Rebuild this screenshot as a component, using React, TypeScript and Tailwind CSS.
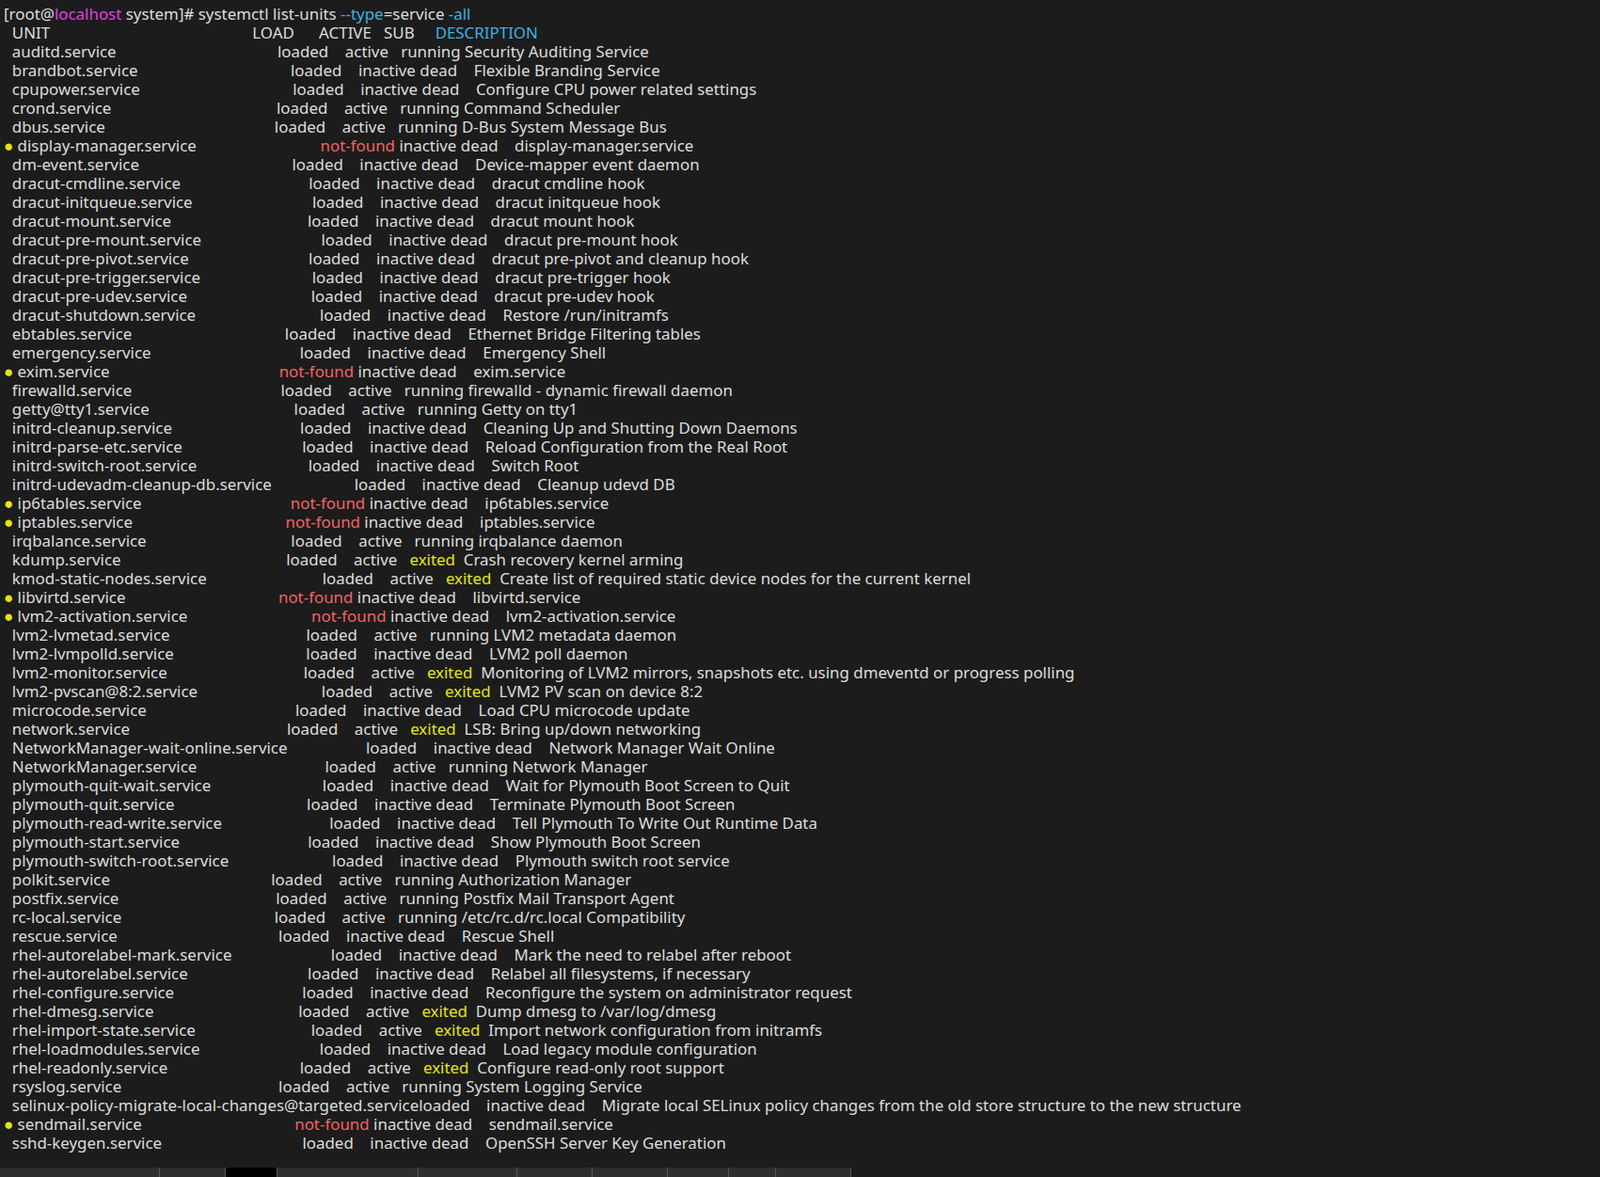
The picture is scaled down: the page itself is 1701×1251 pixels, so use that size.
const rows: [string, string, string, string, string][] = [
  ['auditd.service', 'loaded', 'active', 'running', 'Security Auditing Service'],
  ['brandbot.service', 'loaded', 'inactive', 'dead', 'Flexible Branding Service'],
  ['cpupower.service', 'loaded', 'inactive', 'dead', 'Configure CPU power related settings'],
  ['crond.service', 'loaded', 'active', 'running', 'Command Scheduler'],
  ['dbus.service', 'loaded', 'active', 'running', 'D-Bus System Message Bus'],
  ['display-manager.service', 'not-found', 'inactive', 'dead', 'display-manager.service'],
  ['dm-event.service', 'loaded', 'inactive', 'dead', 'Device-mapper event daemon'],
  ['dracut-cmdline.service', 'loaded', 'inactive', 'dead', 'dracut cmdline hook'],
  ['dracut-initqueue.service', 'loaded', 'inactive', 'dead', 'dracut initqueue hook'],
  ['dracut-mount.service', 'loaded', 'inactive', 'dead', 'dracut mount hook'],
  ['dracut-pre-mount.service', 'loaded', 'inactive', 'dead', 'dracut pre-mount hook'],
  ['dracut-pre-pivot.service', 'loaded', 'inactive', 'dead', 'dracut pre-pivot and cleanup hook'],
  ['dracut-pre-trigger.service', 'loaded', 'inactive', 'dead', 'dracut pre-trigger hook'],
  ['dracut-pre-udev.service', 'loaded', 'inactive', 'dead', 'dracut pre-udev hook'],
  ['dracut-shutdown.service', 'loaded', 'inactive', 'dead', 'Restore /run/initramfs'],
  ['ebtables.service', 'loaded', 'inactive', 'dead', 'Ethernet Bridge Filtering tables'],
  ['emergency.service', 'loaded', 'inactive', 'dead', 'Emergency Shell'],
  ['exim.service', 'not-found', 'inactive', 'dead', 'exim.service'],
  ['firewalld.service', 'loaded', 'active', 'running', 'firewalld - dynamic firewall daemon'],
  ['getty@tty1.service', 'loaded', 'active', 'running', 'Getty on tty1'],
  ['initrd-cleanup.service', 'loaded', 'inactive', 'dead', 'Cleaning Up and Shutting Down Daemons'],
  ['initrd-parse-etc.service', 'loaded', 'inactive', 'dead', 'Reload Configuration from the Real Root'],
  ['initrd-switch-root.service', 'loaded', 'inactive', 'dead', 'Switch Root'],
  ['initrd-udevadm-cleanup-db.service', 'loaded', 'inactive', 'dead', 'Cleanup udevd DB'],
  ['ip6tables.service', 'not-found', 'inactive', 'dead', 'ip6tables.service'],
  ['iptables.service', 'not-found', 'inactive', 'dead', 'iptables.service'],
  ['irqbalance.service', 'loaded', 'active', 'running', 'irqbalance daemon'],
  ['kdump.service', 'loaded', 'active', 'exited', 'Crash recovery kernel arming'],
  ['kmod-static-nodes.service', 'loaded', 'active', 'exited', 'Create list of required static device nodes for the current kernel'],
  ['libvirtd.service', 'not-found', 'inactive', 'dead', 'libvirtd.service'],
  ['lvm2-activation.service', 'not-found', 'inactive', 'dead', 'lvm2-activation.service'],
  ['lvm2-lvmetad.service', 'loaded', 'active', 'running', 'LVM2 metadata daemon'],
  ['lvm2-lvmpolld.service', 'loaded', 'inactive', 'dead', 'LVM2 poll daemon'],
  ['lvm2-monitor.service', 'loaded', 'active', 'exited', 'Monitoring of LVM2 mirrors, snapshots etc. using dmeventd or progress polling'],
  ['lvm2-pvscan@8:2.service', 'loaded', 'active', 'exited', 'LVM2 PV scan on device 8:2'],
  ['microcode.service', 'loaded', 'inactive', 'dead', 'Load CPU microcode update'],
  ['network.service', 'loaded', 'active', 'exited', 'LSB: Bring up/down networking'],
  ['NetworkManager-wait-online.service', 'loaded', 'inactive', 'dead', 'Network Manager Wait Online'],
  ['NetworkManager.service', 'loaded', 'active', 'running', 'Network Manager'],
  ['plymouth-quit-wait.service', 'loaded', 'inactive', 'dead', 'Wait for Plymouth Boot Screen to Quit'],
  ['plymouth-quit.service', 'loaded', 'inactive', 'dead', 'Terminate Plymouth Boot Screen'],
  ['plymouth-read-write.service', 'loaded', 'inactive', 'dead', 'Tell Plymouth To Write Out Runtime Data'],
  ['plymouth-start.service', 'loaded', 'inactive', 'dead', 'Show Plymouth Boot Screen'],
  ['plymouth-switch-root.service', 'loaded', 'inactive', 'dead', 'Plymouth switch root service'],
  ['polkit.service', 'loaded', 'active', 'running', 'Authorization Manager'],
  ['postfix.service', 'loaded', 'active', 'running', 'Postfix Mail Transport Agent'],
  ['rc-local.service', 'loaded', 'active', 'running', '/etc/rc.d/rc.local Compatibility'],
  ['rescue.service', 'loaded', 'inactive', 'dead', 'Rescue Shell'],
  ['rhel-autorelabel-mark.service', 'loaded', 'inactive', 'dead', 'Mark the need to relabel after reboot'],
  ['rhel-autorelabel.service', 'loaded', 'inactive', 'dead', 'Relabel all filesystems, if necessary'],
  ['rhel-configure.service', 'loaded', 'inactive', 'dead', 'Reconfigure the system on administrator request'],
  ['rhel-dmesg.service', 'loaded', 'active', 'exited', 'Dump dmesg to /var/log/dmesg'],
  ['rhel-import-state.service', 'loaded', 'active', 'exited', 'Import network configuration from initramfs'],
  ['rhel-loadmodules.service', 'loaded', 'inactive', 'dead', 'Load legacy module configuration'],
  ['rhel-readonly.service', 'loaded', 'active', 'exited', 'Configure read-only root support'],
  ['rsyslog.service', 'loaded', 'active', 'running', 'System Logging Service'],
  ['selinux-policy-migrate-local-changes@targeted.service', 'loaded', 'inactive', 'dead', 'Migrate local SELinux policy changes from the old store structure to the new structure'],
  ['sendmail.service', 'not-found', 'inactive', 'dead', 'sendmail.service'],
  ['sshd-keygen.service', 'loaded', 'inactive', 'dead', 'OpenSSH Server Key Generation'],
];

const taskbar = [170, 70, 55, 150, 105, 80, 80, 65, 50, 80];

export default function App() {
  return (
    <div className="flex h-[1251px] w-[1701px] flex-col overflow-hidden bg-[#1c1c1c] font-['Liberation_Mono'] text-[16.9px] leading-[20px] text-[#dcdcdc]">
      <div className="flex-1 whitespace-pre px-[4px] pt-[5px]">
        <div>
          [root@<span className="text-[#e23fe0]">localhost</span> system]# systemctl list-units{' '}
          <span className="text-[#3fb0e0]">--type</span>=service <span className="text-[#3fb0e0]">-all</span>
        </div>
        <div>
          {'  ' + 'UNIT'.padEnd(53) + 'LOAD'.padEnd(10) + 'ACTIVE'.padEnd(9) + 'SUB'.padEnd(8)}
          <span className="text-[#3fb0e0]">DESCRIPTION</span>
        </div>
        {rows.map(([unit, load, active, sub, desc]) => {
          const missing = load === 'not-found';
          return (
            <div key={unit}>
              <span className="text-[#e5e510]">{missing ? '●' : ' '}</span>
              {' ' + unit.padEnd(53)}
              <span className={missing ? 'text-[#f06464]' : ''}>{load.padEnd(10)}</span>
              {active.padEnd(9)}
              <span className={sub === 'exited' ? 'text-[#e5e510]' : ''}>{sub.padEnd(8)}</span>
              {desc}
            </div>
          );
        })}
      </div>
      <div className="flex h-[10px] bg-[#2e2e2e]">
        {taskbar.map((w, i) => (
          <div key={i} className={`border-r border-[#555] ${i === 2 ? 'bg-black' : ''}`} style={{ width: w }} />
        ))}
        <div className="flex-1 bg-[#1c1c1c]" />
      </div>
    </div>
  );
}
